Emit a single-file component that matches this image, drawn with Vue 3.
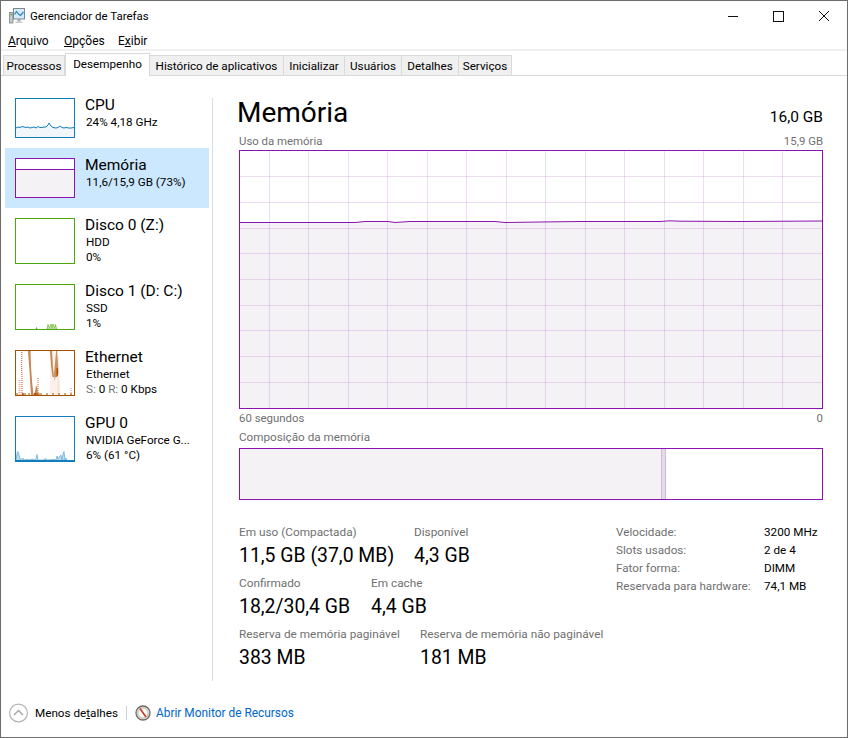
<script setup>
const tabs = [
  { label: 'Processos', w: 62 },
  { label: 'Desempenho', w: 85, active: true },
  { label: 'Histórico de aplicativos', w: 134 },
  { label: 'Inicializar', w: 61 },
  { label: 'Usuários', w: 57 },
  { label: 'Detalhes', w: 57 },
  { label: 'Serviços', w: 53 }
]

const sideItems = [
  { key: 'cpu', name: 'CPU', lines: ['24%  4,18 GHz'], tall: false },
  { key: 'mem', name: 'Memória', lines: ['11,6/15,9 GB (73%)'], tall: false, active: true },
  { key: 'd0', name: 'Disco 0 (Z:)', lines: ['HDD', '0%'], tall: true },
  { key: 'd1', name: 'Disco 1 (D: C:)', lines: ['SSD', '1%'], tall: true },
  { key: 'eth', name: 'Ethernet', lines: ['Ethernet'], net: true, tall: true },
  { key: 'gpu', name: 'GPU 0', lines: ['NVIDIA GeForce G...', '6%  (61 °C)'], tall: true }
]

const vLines = Array.from({ length: 14 }, (_, k) => Math.floor(29 + 39.5 * k) + 0.5)
const hLines = Array.from({ length: 9 }, (_, k) => Math.floor(25.7 * (k + 1)) + 0.5)

const memLine = '0,71.5 115,71.5 125,70.5 148,70.5 155,71.5 162,71 170,70.5 255,70.5 265,71.5 300,71 340,70.5 420,70.5 430,69.8 440,70.2 500,70.5 582,70'

const rows = [
  { cls: 'row-a', items: [['Em uso (Compactada)', '11,5 GB (37,0 MB)'], ['Disponível', '4,3 GB']] },
  { cls: 'row-b', items: [['Confirmado', '18,2/30,4 GB'], ['Em cache', '4,4 GB']] },
  { cls: 'row-c', items: [['Reserva de memória paginável', '383 MB'], ['Reserva de memória não paginável', '181 MB']] }
]

const specs = [
  ['Velocidade:', '3200 MHz'],
  ['Slots usados:', '2 de 4'],
  ['Fator forma:', 'DIMM'],
  ['Reservada para hardware:', '74,1 MB']
]
</script>

<template>
  <div class="window">
    <header class="titlebar">
      <svg class="app-icon" viewBox="0 0 16 16" width="16" height="16">
        <rect x="0.5" y="4.5" width="3.5" height="10.5" fill="#c4c9cc" stroke="#7d8386" stroke-width="0.8" />
        <rect x="1.3" y="6" width="1.8" height="1.2" fill="#4fa64a" />
        <rect x="4.5" y="0.5" width="11" height="10.5" fill="#d6eafa" stroke="#7b8790" />
        <polyline points="5.5,6.5 7.5,3.5 9.5,6 11.5,7.5 14.5,4" fill="none" stroke="#2b86c5" stroke-width="1.2" />
        <rect x="8.5" y="11" width="3" height="2.5" fill="#a3a9ae" />
        <rect x="6.5" y="13.5" width="7" height="1.5" fill="#c5cacd" />
      </svg>
      <span class="title-text">Gerenciador de Tarefas</span>
      <div class="controls">
        <svg viewBox="0 0 46 30" width="46" height="30"><line x1="19" y1="15.5" x2="29" y2="15.5" stroke="#111" /></svg>
        <svg viewBox="0 0 46 30" width="46" height="30"><rect x="18.5" y="10.5" width="10" height="10" fill="none" stroke="#111" /></svg>
        <svg viewBox="0 0 46 30" width="46" height="30"><path d="M18 10 L28 20 M28 10 L18 20" stroke="#111" fill="none" /></svg>
      </div>
    </header>

    <nav class="menu">
      <span class="m1"><u>A</u>rquivo</span>
      <span class="m2"><u>O</u>pções</span>
      <span>E<u>x</u>ibir</span>
    </nav>

    <div class="tabs">
      <button
        v-for="t in tabs"
        :key="t.label"
        class="tab"
        :class="{ active: t.active }"
        :style="{ width: t.w + 'px' }"
      >{{ t.label }}</button>
    </div>

    <div class="body">
      <aside class="sidebar">
        <div
          v-for="item in sideItems"
          :key="item.key"
          class="side-item"
          :class="{ active: item.active }"
        >
          <div class="thumb" :class="['thumb-' + item.key, { tall: item.tall }]">
            <svg v-if="item.key === 'cpu'" viewBox="0 0 58 38" preserveAspectRatio="none">
              <path d="M0,29 L2,28 4,28.5 6,27.5 8,28 10,28.5 12,28 14,29 16,28.5 18,28 20,29 22,27.5 24,28.5 26,28.5 28,28 30,28 32,26 33,24 35,27 37,28.5 40,29 42,28.5 44,27 46,28.5 48,29 50,28.5 53,29 55,29 58,28.5 L58,38 L0,38 Z" fill="#f1f6fa" stroke="none" />
              <polyline points="0,29 2,28 4,28.5 6,27.5 8,28 10,28.5 12,28 14,29 16,28.5 18,28 20,29 22,27.5 24,28.5 26,28.5 28,28 30,28 32,26 33,24 35,27 37,28.5 40,29 42,28.5 44,27 46,28.5 48,29 50,28.5 53,29 55,29 58,28.5" fill="none" stroke="#117dbb" stroke-width="1" />
            </svg>
            <svg v-else-if="item.key === 'mem'" viewBox="0 0 58 38" preserveAspectRatio="none">
              <rect x="0" y="10.5" width="58" height="28" fill="#f4f2f5" />
              <line x1="0" y1="10.5" x2="58" y2="10.5" stroke="#8b12ae" stroke-width="1" />
            </svg>
            <svg v-else-if="item.key === 'd1'" viewBox="0 0 58 44" preserveAspectRatio="none">
              <path d="M20,44 L20.5,42.5 L21,44 Z M31,44 L32,39.500 L33.5,43 L35,39 L36,43 L37,39 L38.5,43 L39.5,39.500 L40.5,44 Z" fill="#dcefcd" stroke="#4da60c" stroke-width="0.600" />
            </svg>
            <svg v-else-if="item.key === 'eth'" viewBox="0 0 58 44" preserveAspectRatio="none">
              <path d="M34,44 L34,14 L35,0 L38,0 L40,20 L41,44 Z" fill="#fbf1ea" />
              <path d="M40,0 L41.500,0 L43,10 L44,44 L41,44 Z" fill="#f8e6da" />
              <path d="M12,0 L14.500,0 L15,15 L16,30 L17.500,44 L15,44 L13.500,20 Z" fill="#c68552" />
              <path d="M34,0 L36,0 L37,18 L38,26 L36.500,26 L35,14 Z" fill="#c68552" />
              <path d="M38,22 L39,12 L40,0 L41,0 L42,14 L42.500,22 L41,26 L39.500,26 L38.500,30 Z" fill="#cb8f60" />
              <path d="M40.500,17 L42,17 L42,24 L40.500,26 Z" fill="#a74f01" />
              <path d="M17,44 L19,41 L20,34 L21.500,38 L22,44 Z" fill="#c68552" />
              <polyline points="6,44 6,26 5.500,14 6,0" fill="none" stroke="#d2693c" stroke-width="1.200" stroke-dasharray="1 1" />
              <polyline points="3.500,44 3.500,28" fill="none" stroke="#e8b296" stroke-width="2" stroke-dasharray="1 1" />
              <polyline points="22,44 22,27" fill="none" stroke="#dc8a60" stroke-width="1.400" stroke-dasharray="1 1" />
              <polyline points="55,44 55,37" fill="none" stroke="#e8b296" stroke-width="1.400" stroke-dasharray="1 1" />
              <polyline points="0,43 58,43" fill="none" stroke="#a74f01" stroke-width="1" stroke-dasharray="2 4" />
              <polyline points="6,43 10,43" fill="none" stroke="#a74f01" stroke-width="1" />
              <polyline points="18,43 24,43" fill="none" stroke="#a74f01" stroke-width="1" />
            </svg>
            <svg v-else-if="item.key === 'gpu'" viewBox="0 0 58 44" preserveAspectRatio="none">
              <path d="M0,43.500 L1,36 L2,34.500 L3,38 L4.500,43 L7,41 L8,43 L12,42.500 L13,43 L17,42 L18,43 L20,42 L21,37.500 L22,43 L27,43 L30,41.500 L31,43 L38,42.500 L40,43 L41,39 L42,42 L45,38 L46,43 L47,37 L48,34.500 L49,43 L50,41 L51,43.500 L58,43.500 L58,44 L0,44 Z" fill="#bcdcef" stroke="#4a9ccd" stroke-width="0.600" />
              <line x1="0" y1="43.500" x2="58" y2="43.500" stroke="#117dbb" stroke-width="1" />
            </svg>
          </div>
          <div class="side-text">
            <div class="side-name">{{ item.name }}</div>
            <div v-for="line in item.lines" :key="line" class="side-sub">{{ line }}</div>
            <div v-if="item.net" class="side-sub"><span class="muted">S:</span> 0 <span class="muted">R:</span> 0 Kbps</div>
          </div>
        </div>
      </aside>

      <div class="divider"></div>

      <main class="main">
        <div class="head">
          <h1>Memória</h1>
          <span class="total">16,0 GB</span>
        </div>
        <div class="label-row chart-label">
          <span>Uso da memória</span>
          <span>15,9 GB</span>
        </div>
        <div class="graph">
          <svg viewBox="0 0 582 257" width="582" height="257">
            <polygon :points="memLine + ' 582,257 0,257'" fill="#f4f2f5" />
            <line v-for="x in vLines" :key="'v' + x" :x1="x" :x2="x" y1="0" y2="257" class="grid" />
            <line v-for="y in hLines" :key="'h' + y" x1="0" x2="582" :y1="y" :y2="y" class="grid" />
            <polyline :points="memLine" fill="none" stroke="#8b12ae" stroke-width="1" />
          </svg>
        </div>
        <div class="label-row axis">
          <span>60 segundos</span>
          <span>0</span>
        </div>
        <div class="label-row comp-label"><span>Composição da memória</span></div>
        <div class="comp">
          <div class="comp-used"></div>
          <div class="comp-mod"></div>
        </div>

        <div class="stats">
          <div class="stat-cols">
            <div v-for="r in rows" :key="r.cls" class="stat-row" :class="r.cls">
              <div v-for="s in r.items" :key="s[0]" class="stat">
                <div class="stat-label">{{ s[0] }}</div>
                <div class="stat-value">{{ s[1] }}</div>
              </div>
            </div>
          </div>
          <dl class="specs">
            <div v-for="s in specs" :key="s[0]" class="spec">
              <dt>{{ s[0] }}</dt>
              <dd>{{ s[1] }}</dd>
            </div>
          </dl>
        </div>
      </main>
    </div>

    <footer class="footer">
      <svg class="less" viewBox="0 0 20 20" width="20" height="20">
        <circle cx="9.500" cy="10" r="8.900" fill="#fff" stroke="#b4b4b4" stroke-width="1.200" />
        <polyline points="5,12 9.500,7.500 14,12" fill="none" stroke="#a0a0a0" stroke-width="1.300" />
      </svg>
      <span class="less-text">Menos de<u>t</u>alhes</span>
      <span class="foot-sep"></span>
      <svg class="monitor" viewBox="0 0 16 16" width="16" height="16">
        <circle cx="8" cy="8" r="7" fill="#e4e1da" stroke="#6f6b64" stroke-width="1.300" />
        <circle cx="8" cy="8" r="5" fill="#fdfcf9" stroke="#b3aea5" stroke-width="0.800" />
        <line x1="5" y1="3.500" x2="11" y2="12" stroke="#d0342c" stroke-width="1.600" />
      </svg>
      <a class="link">Abrir Monitor de Recursos</a>
    </footer>
  </div>
</template>

<style scoped>
.window {
  box-sizing: border-box;
  width: 848px;
  height: 738px;
  border: 1px solid #6d6d6d;
  background: #fff;
  display: flex;
  flex-direction: column;
  font-family: Roboto, "Liberation Sans", sans-serif;
  font-size: 11.7px;
  color: #000;
  overflow: hidden;
}
.titlebar {
  display: flex;
  align-items: center;
  height: 30px;
  flex: none;
  padding-left: 8px;
}
.app-icon { margin-right: 5px; }
.title-text { line-height: 30px; font-size: 11.5px; }
.controls { margin-left: auto; display: flex; }
.menu {
  display: flex;
  height: 18px;
  line-height: 20px;
  padding-left: 7px;
  flex: none;
  font-size: 12px;
}
.m1 { width: 56px; }
.m2 { width: 54px; }
.tabs {
  display: flex;
  align-items: flex-end;
  flex: none;
  padding-left: 2px;
  border-top: 2px solid #f0f0f0;
  border-bottom: 1px solid #d9d9d9;
  box-sizing: content-box;
  height: 24px;
}
.tab {
  box-sizing: border-box;
  height: 20px;
  padding: 2px 0 0;
  margin: 0;
  background: #f0f0f0;
  border: 1px solid #d9d9d9;
  border-left: none;
  border-bottom: none;
  font: inherit;
  color: #000;
  text-align: center;
  line-height: 17px;
}
.tab:first-child { border-left: 1px solid #d9d9d9; }
.tab.active {
  height: 23px;
  margin-bottom: -1px;
  background: #fff;
  border-left: 1px solid #d9d9d9;
  line-height: 20px;
  padding: 0 0 2px;
  position: relative;
}
.body {
  flex: 1;
  display: flex;
  min-height: 0;
}
.sidebar {
  width: 211px;
  flex: none;
  box-sizing: border-box;
  padding: 12px 3px 0 4px;
}
.side-item {
  display: flex;
  padding: 10px 10px;
  box-sizing: border-box;
}
.side-item.active { background: #cce8ff; }
.thumb {
  width: 60px;
  height: 40px;
  box-sizing: border-box;
  flex: none;
  border: 1px solid #117dbb;
  background: #fff;
}
.thumb.tall { height: 46px; }
.thumb svg { display: block; width: 100%; height: 100%; }
.thumb-mem { border-color: #8b12ae; }
.thumb-d0, .thumb-d1 { border-color: #4da60c; }
.thumb-eth { border-color: #a74f01; }
.side-text {
  margin: -3px 0 -1px 10px;
  white-space: nowrap;
}
.side-name { font-size: 15.5px; line-height: 20px; }
.side-sub { line-height: 15px; padding-left: 1px; }
.muted { color: #707070; }
.divider {
  width: 1px;
  flex: none;
  margin: 22px 0 5px;
  background: #dcdcdc;
}
.main {
  flex: 1;
  min-width: 0;
  padding: 16px 24px 0 26px;
  box-sizing: border-box;
}
.head {
  display: flex;
  justify-content: space-between;
  align-items: baseline;
  height: 41px;
}
h1 {
  margin: 0 0 0 -2px;
  font-size: 28px;
  font-weight: 400;
  line-height: 41px;
}
.total { font-size: 15.5px; }
.label-row {
  display: flex;
  justify-content: space-between;
  color: #707070;
  line-height: 16px;
  font-size: 11.4px;
}
.chart-label { height: 17px; }
.graph {
  width: 584px;
  height: 259px;
  box-sizing: border-box;
  border: 1px solid #8b12ae;
}
.graph svg { display: block; }
.grid { stroke: #8b12ae; stroke-opacity: 0.15; stroke-width: 1; }
.axis { margin-top: 1px; }
.comp-label { margin-top: 3px; height: 19px; font-size: 11.7px; }
.comp {
  display: flex;
  width: 584px;
  height: 52px;
  box-sizing: border-box;
  border: 1px solid #8b12ae;
}
.comp-used { width: 421px; background: #f4f2f5; }
.comp-mod {
  width: 5px;
  box-sizing: border-box;
  background: #e6dbe9;
  border-left: 1px solid #cfb8d8;
  border-right: 1px solid #cfb8d8;
}
.stats {
  display: flex;
  margin-top: 24px;
}
.stat-cols { width: 377px; flex: none; }
.stat-row { display: flex; margin-bottom: 7px; }
.stat { flex: none; }
.row-a .stat:first-child { width: 175px; }
.row-b .stat:first-child { width: 132px; }
.row-c .stat:first-child { width: 181px; }
.stat-label { color: #707070; line-height: 16px; white-space: nowrap; font-size: 11.8px; }
.stat-value { font-size: 19.4px; line-height: 24px; margin-top: 4px; white-space: nowrap; }
.specs { margin: -1px 0 0; }
.spec { display: flex; line-height: 18px; }
dt { width: 148px; color: #707070; }
dd { margin: 0; }
.footer {
  flex: none;
  height: 51px;
  display: flex;
  align-items: center;
  padding: 2px 0 0 8px;
  box-sizing: border-box;
}
.less-text { margin-left: 6px; }
.foot-sep {
  width: 1px;
  height: 14px;
  background: #cfcfcf;
  margin: 0 8px;
}
.link { color: #0066cc; margin-left: 5px; font-size: 11.9px; }
</style>
